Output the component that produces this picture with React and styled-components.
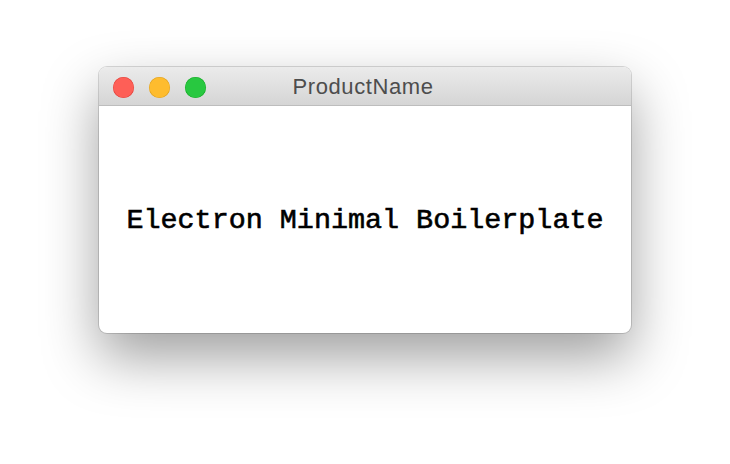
import styled, { createGlobalStyle } from 'styled-components';

const GlobalStyle = createGlobalStyle`
    html, body {
        margin:0;
        padding:0;
        background:#ffffff;
    }
`

const Page = styled.div`
    width:730px;
    height:464px;
    display:flex;
    justify-content:center;
    align-items:flex-start;
    padding-top:67px;
    box-sizing:border-box;
`

const Window = styled.div`
    width:532px;
    height:266px;
    display:flex;
    flex-direction:column;
    border-radius:8px;
    overflow:hidden;
    background:#ffffff;
    box-shadow: 0 0 0 1px rgba(0,0,0,0.14), 0 24px 55px rgba(0,0,0,0.38);
`

const TitleBar = styled.div`
    position:relative;
    height:39px;
    flex-shrink:0;
    display:flex;
    align-items:center;
    justify-content:center;
    background:linear-gradient(#ebebeb, #d5d5d5);
    border-bottom:1px solid #bdbdbd;
    box-sizing:border-box;
`

const Lights = styled.div`
    position:absolute;
    left:14px;
    top:10px;
    display:flex;
    gap:15px;
`

const Light = styled.span`
    width:21px;
    height:21px;
    border-radius:50%;
    background:${props => props.color};
    box-shadow: inset 0 0 0 0.5px ${props => props.edge};
`

const Title = styled.span`
    font-family:"Liberation Sans", Arial, sans-serif;
    font-size:22px;
    letter-spacing:0.6px;
    color:#4d4d4d;
    margin-right:4px;
    margin-top:2px;
`

const Content = styled.main`
    flex:1;
    display:flex;
    align-items:center;
    justify-content:center;
`

const Heading = styled.h1`
    margin:0;
    font-family:"Liberation Mono", "Courier New", monospace;
    font-weight:400;
    font-size:28.4px;
    -webkit-text-stroke:0.6px #000000;
    color:#000000;
    margin-top:1px;
`

const App = () => {
    return(
        <Page>
            <GlobalStyle/>
            <Window>
                <TitleBar>
                    <Lights>
                        <Light color="#fe5f57" edge="#e0443e"/>
                        <Light color="#febc2e" edge="#dea123"/>
                        <Light color="#28c840" edge="#1aab29"/>
                    </Lights>
                    <Title>ProductName</Title>
                </TitleBar>
                <Content>
                    <Heading>Electron Minimal Boilerplate</Heading>
                </Content>
            </Window>
        </Page>
    )
}

export default App;
